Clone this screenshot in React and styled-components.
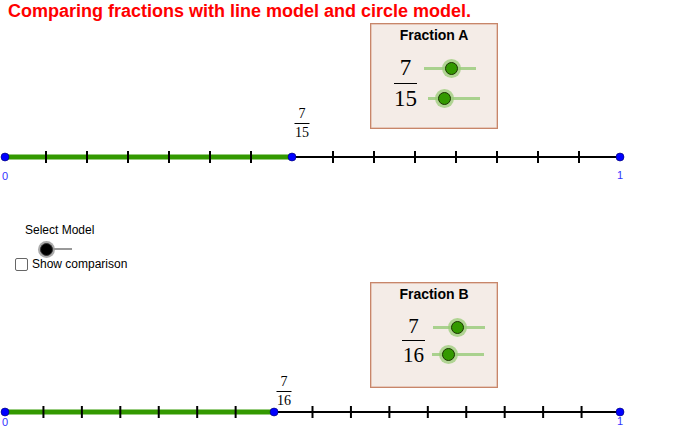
import React from "react";
import styled, { createGlobalStyle } from "styled-components";

const Global = createGlobalStyle`
  html, body {
    margin: 0;
    padding: 0;
    background: #ffffff;
  }
  body {
    font-family: "Liberation Sans", Arial, sans-serif;
    overflow: hidden;
  }
`;

const W = 693;
const X0 = 5;
const X1 = 620;

const NumberLine = ({ num, den, height, lineY, labelTop, zeroTop, oneTop }) => {
  const xp = X0 + ((X1 - X0) * num) / den;
  const ticks = [];
  for (let i = 1; i < den; i++) {
    if (i === num) continue;
    ticks.push(X0 + ((X1 - X0) * i) / den);
  }
  return (
    <LineWrap $h={height}>
      <svg width={W} height={height}>
        <line x1={X0} y1={lineY} x2={X1} y2={lineY} stroke="#000" strokeWidth="2" />
        <line x1={X0} y1={lineY} x2={xp} y2={lineY} stroke="#339900" strokeWidth="5" />
        {ticks.map((x) => (
          <line key={x} x1={x} y1={lineY - 6} x2={x} y2={lineY + 6} stroke="#000" strokeWidth="2" />
        ))}
        <circle cx={X0} cy={lineY} r="4" fill="#0000ff" stroke="#000066" strokeWidth="0.6" />
        <circle cx={xp} cy={lineY} r="4" fill="#0000ff" stroke="#000066" strokeWidth="0.6" />
        <circle cx={X1} cy={lineY} r="4" fill="#0000ff" stroke="#000066" strokeWidth="0.6" />
      </svg>
      <EndLabel style={{ left: X0 - 3, top: zeroTop }}>0</EndLabel>
      <EndLabel style={{ left: X1 - 3, top: oneTop }}>1</EndLabel>
      <PinFrac style={{ left: xp + 10, top: labelTop }}>
        <SmallNum>{num}</SmallNum>
        <SmallBar />
        <SmallNum>{den}</SmallNum>
      </PinFrac>
    </LineWrap>
  );
};

const Slider = ({ shift, knob }) => (
  <SliderTrack $shift={shift}>
    <Knob style={{ left: knob }} />
  </SliderTrack>
);

const FractionPanel = ({ title, num, den, size, sliders, bodyTop, bodyLeft, gap }) => (
  <Panel>
    <PanelTitle>{title}</PanelTitle>
    <PanelBody $top={bodyTop} $left={bodyLeft}>
      <Frac>
        <BigNum $size={size}>{num}</BigNum>
        <BigBar />
        <BigNum $size={size}>{den}</BigNum>
      </Frac>
      <Sliders $gap={gap}>
        {sliders.map((s, i) => (
          <Slider key={i} shift={s.shift} knob={s.knob} />
        ))}
      </Sliders>
    </PanelBody>
  </Panel>
);

export default function App() {
  return (
    <>
      <Global />
      <Page>
        <Title>Comparing fractions with line model and circle model.</Title>
        <PanelRow>
          <FractionPanel
            title="Fraction A"
            num={7}
            den={15}
            size={23}
            bodyTop={16}
            bodyLeft={23}
            gap={27}
            sliders={[
              { shift: 0, knob: 27 },
              { shift: 4, knob: 16 },
            ]}
          />
        </PanelRow>
        <NumberLine num={7} den={15} height={59} lineY={28} labelTop={-22} zeroTop={41} oneTop={40} />
        <Controls>
          <ControlLabel>Select Model</ControlLabel>
          <ModelSlider>
            <ModelKnob />
          </ModelSlider>
          <CheckRow>
            <CheckBox />
            <span>Show comparison</span>
          </CheckRow>
        </Controls>
        <PanelRow>
          <FractionPanel
            title="Fraction B"
            num={7}
            den={16}
            size={21}
            bodyTop={16}
            bodyLeft={31}
            gap={24}
            sliders={[
              { shift: 1, knob: 24 },
              { shift: 0, knob: 16 },
            ]}
          />
        </PanelRow>
        <NumberLine num={7} den={16} height={40} lineY={24} labelTop={-13} zeroTop={28} oneTop={27} />
      </Page>
    </>
  );
}

const Page = styled.div`
  width: 693px;
  height: 428px;
  display: flex;
  flex-direction: column;
  overflow: hidden;
`;

const Title = styled.div`
  height: 23px;
  line-height: 22px;
  padding-left: 8px;
  font-size: 18px;
  font-weight: bold;
  color: #ff0000;
  white-space: nowrap;
`;

const PanelRow = styled.div`
  display: flex;
  padding-left: 370px;
`;

const Panel = styled.div`
  box-sizing: border-box;
  width: 128px;
  height: 106px;
  background: #f4ece7;
  border: 1px solid #c7866a;
  box-shadow: inset 0 0 0 0.5px #d9a48d;
  display: flex;
  flex-direction: column;
`;

const PanelTitle = styled.div`
  text-align: center;
  font-size: 14px;
  font-weight: bold;
  color: #000;
  line-height: 16px;
  padding-top: 3px;
`;

const PanelBody = styled.div`
  display: flex;
  align-items: center;
  padding-left: ${(p) => p.$left}px;
  margin-top: ${(p) => p.$top}px;
`;

const Frac = styled.div`
  display: flex;
  flex-direction: column;
  align-items: center;
  width: 23px;
`;

const BigNum = styled.div`
  font-family: "Liberation Serif", "Times New Roman", serif;
  font-size: ${(p) => p.$size}px;
  line-height: ${(p) => p.$size - 5}px;
  color: #000;
`;

const BigBar = styled.div`
  width: 23px;
  height: 1px;
  background: #000;
  margin: 6px 0 6px;
`;

const Sliders = styled.div`
  display: flex;
  flex-direction: column;
  gap: ${(p) => p.$gap}px;
  margin-left: 7px;
  margin-top: 0px;
`;

const SliderTrack = styled.div`
  position: relative;
  width: 52px;
  height: 3px;
  background: #a9d18e;
  margin-left: ${(p) => p.$shift}px;
`;

const Knob = styled.div`
  position: absolute;
  top: 50%;
  width: 11px;
  height: 11px;
  margin: -6.5px 0 0 -6.5px;
  border-radius: 50%;
  background: #339900;
  border: 1px solid #1a3300;
  box-shadow: 0 0 0 3px rgba(153, 204, 119, 0.75);
`;

const LineWrap = styled.div`
  position: relative;
  width: 693px;
  height: ${(p) => p.$h}px;
  svg {
    display: block;
  }
`;

const EndLabel = styled.div`
  position: absolute;
  font-size: 11px;
  line-height: 12px;
  color: #3333ff;
`;

const PinFrac = styled.div`
  position: absolute;
  transform: translateX(-50%);
  display: flex;
  flex-direction: column;
  align-items: center;
`;

const SmallNum = styled.div`
  font-family: "Liberation Serif", "Times New Roman", serif;
  font-size: 14px;
  line-height: 13px;
  color: #000;
`;

const SmallBar = styled.div`
  width: 15px;
  height: 1px;
  background: #000;
  margin: 3px 0 2px;
`;

const Controls = styled.div`
  height: 94px;
  display: flex;
  flex-direction: column;
  padding-top: 35px;
  box-sizing: border-box;
  font-size: 12px;
  color: #000;
`;

const ControlLabel = styled.div`
  padding-left: 25px;
  line-height: 14px;
`;

const ModelSlider = styled.div`
  position: relative;
  margin: 11px 0 0 46px;
  width: 26px;
  height: 2px;
  background: #999;
`;

const ModelKnob = styled.div`
  position: absolute;
  left: 0;
  top: 50%;
  width: 11px;
  height: 11px;
  margin: -6.5px 0 0 -6.5px;
  border-radius: 50%;
  background: #000;
  border: 1px solid #333;
  box-shadow: 0 0 0 2px rgba(150, 150, 150, 0.8);
`;

const CheckRow = styled.div`
  display: flex;
  align-items: center;
  gap: 4px;
  padding-left: 15px;
  margin-top: 7px;
  line-height: 14px;
`;

const CheckBox = styled.div`
  box-sizing: border-box;
  width: 13px;
  height: 13px;
  border: 1px solid #666;
  border-radius: 2px;
  background: #fff;
`;
